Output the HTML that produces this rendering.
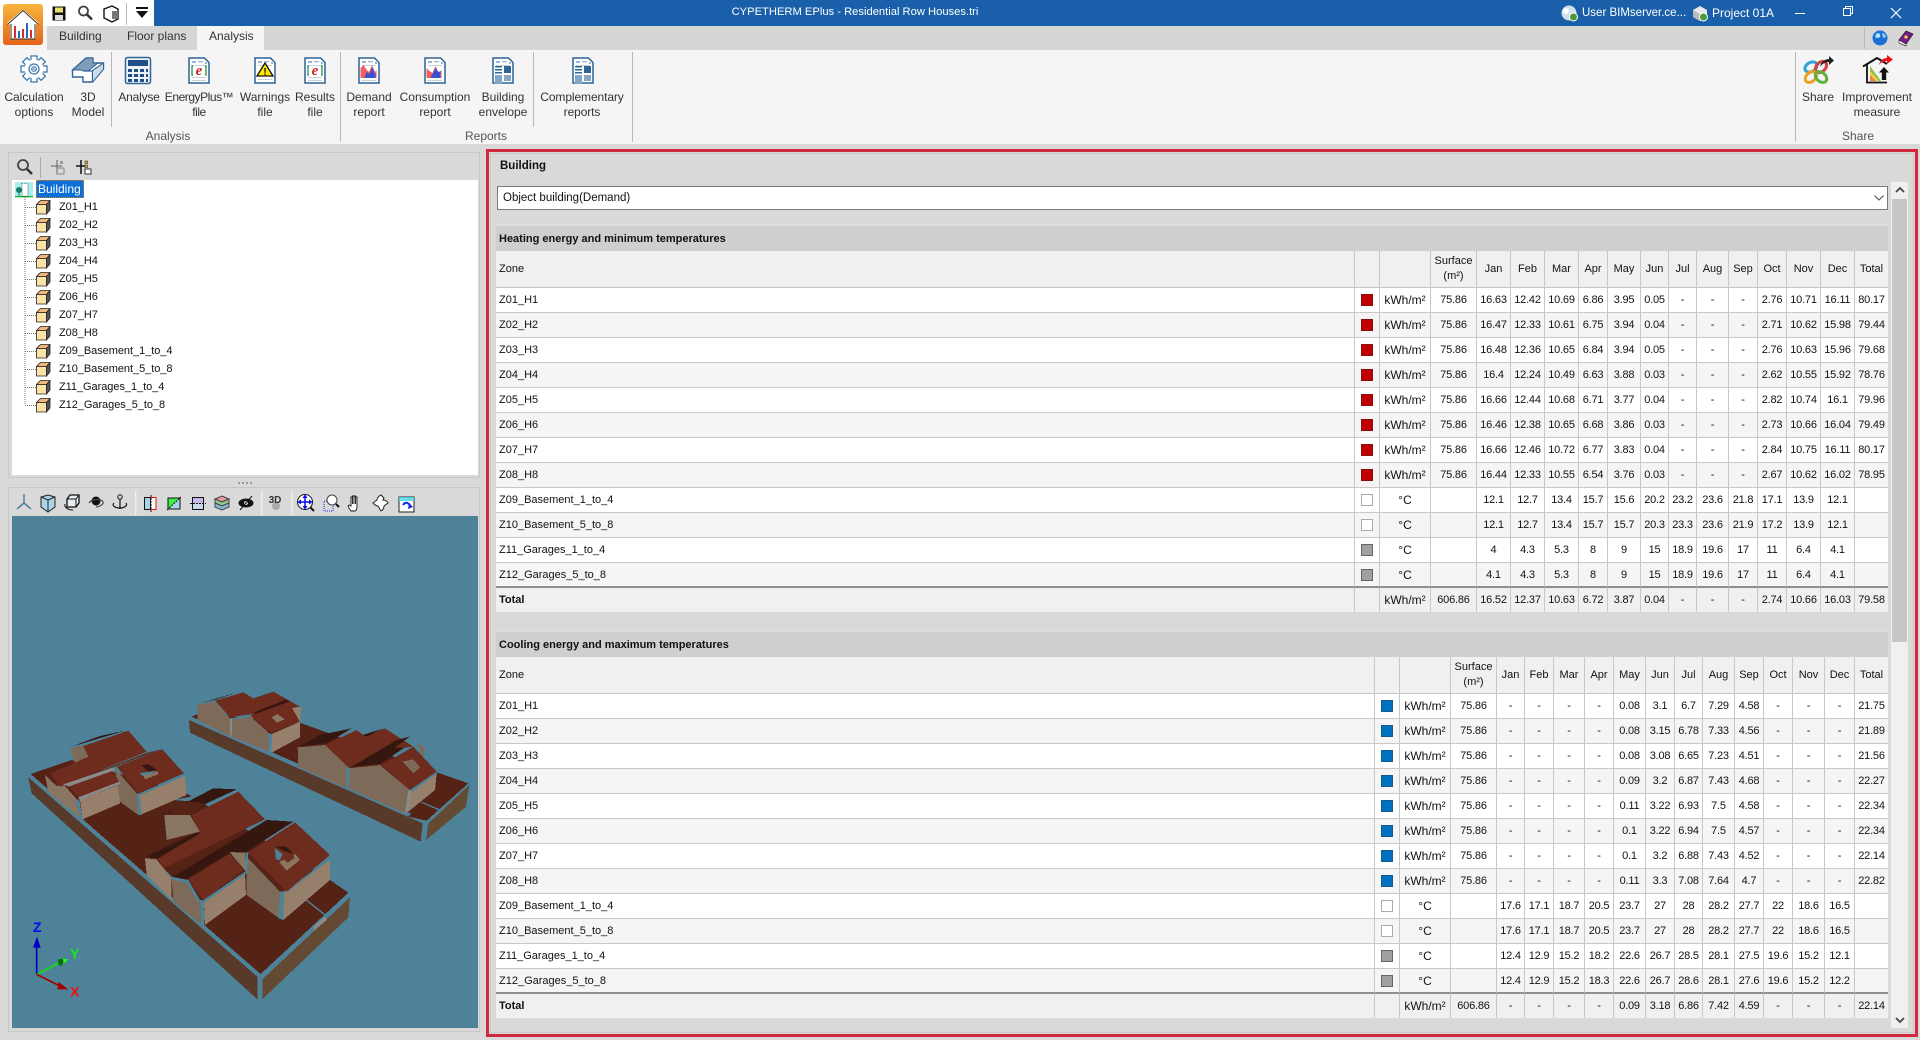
<!DOCTYPE html>
<html><head><meta charset="utf-8"><title>CYPETHERM EPlus</title>
<style>
html,body{margin:0;padding:0;width:1920px;height:1040px;overflow:hidden;background:#d9d9d9;font-family:"Liberation Sans",sans-serif;color:#222}
div{position:absolute;box-sizing:border-box}
.c{white-space:nowrap;transform:translateX(-50%);text-align:center;font-size:12px;line-height:15px;color:#333}
.a{white-space:nowrap;font-size:12px;line-height:16px}
.tr{left:59px;font-size:11px;line-height:18px;height:18px;color:#111;white-space:nowrap;letter-spacing:-.05px}
.sec{left:496px;width:1392px;height:27px;background:#cfcfcf;border-top:2px solid #dcdcdc;font-weight:bold;font-size:11px;line-height:26px;padding-left:3px;color:#111}
table{position:absolute;left:496px;width:1392px;table-layout:fixed;border-collapse:separate;border-spacing:0;font-size:11px;color:#111}
td{height:25px;padding:0;text-align:center;white-space:nowrap;overflow:hidden;border-right:1px solid #c8c8c8;border-bottom:1px solid #c8c8c8;box-sizing:border-box;letter-spacing:-.2px;background:#fff}
td:first-child{text-align:left;padding-left:3px;letter-spacing:0}
td:nth-child(3){font-size:12px;letter-spacing:0}
td:last-child{border-right:0;background:#f4f4f4}
tr:nth-child(odd) td{background:#f5f5f5}
tr.w td{background:#fff}
tr.h td{height:37px;background:#f0f0f0;line-height:15px;letter-spacing:0;border-bottom:1px solid #c4c4c4}
tr.p td{border-bottom:2px solid #8f8f8f}
tr.t td{height:24px;background:#f0f0f0;border-bottom:0}
i{display:block;width:10px;height:10px;margin:0 auto;border:1px solid #666}
i.r{background:#c00000;border-color:#8a1010}i.b{background:#0070c0;border-color:#1a5a8a}i.g{background:#a0a0a0;border-color:#666}i.e{background:#fff;border-color:#aaa}
</style></head><body>

<!-- chrome -->
<div style="left:0;top:0;width:1920px;height:26px;background:#1a5fa9"></div>
<div style="left:0;top:0;width:154px;height:26px;background:#fff"></div>
<div style="left:0;top:26px;width:1920px;height:24px;background:#d6d6d6"></div>
<div style="left:0;top:26px;width:47px;height:24px;background:#f5f5f5"></div>
<div style="left:197px;top:26px;width:67px;height:24px;background:#f5f5f5"></div>
<div style="left:0;top:50px;width:1920px;height:94px;background:#f5f5f5"></div>

<div class="c" style="left:855px;top:5px;color:#fff;font-size:11.2px;width:260px">CYPETHERM EPlus - Residential Row Houses.tri</div>
<div class="a" style="left:1582px;top:5px;color:#fff;font-size:11.5px">User BIMserver.ce...</div>
<div class="a" style="left:1712px;top:5px;color:#fff;font-size:12px">Project 01A</div>

<div class="a" style="left:59px;top:28px;color:#333">Building</div>
<div class="a" style="left:127px;top:28px;color:#333">Floor plans</div>
<div class="a" style="left:209px;top:28px;color:#333">Analysis</div>

<div class="c" style="left:34px;top:90px">Calculation<br>options</div>
<div class="c" style="left:88px;top:90px">3D<br>Model</div>
<div class="c" style="left:139px;top:90px;letter-spacing:-.2px">Analyse</div>
<div class="c" style="left:199px;top:90px;letter-spacing:-.45px">EnergyPlus™<br>file</div>
<div class="c" style="left:265px;top:90px">Warnings<br>file</div>
<div class="c" style="left:315px;top:90px">Results<br>file</div>
<div class="c" style="left:369px;top:90px">Demand<br>report</div>
<div class="c" style="left:435px;top:90px">Consumption<br>report</div>
<div class="c" style="left:503px;top:90px">Building<br>envelope</div>
<div class="c" style="left:582px;top:90px;letter-spacing:-.1px">Complementary<br>reports</div>
<div class="c" style="left:168px;top:129px;color:#555">Analysis</div>
<div class="c" style="left:486px;top:129px;color:#555">Reports</div>
<div class="c" style="left:1818px;top:90px">Share</div>
<div class="c" style="left:1877px;top:90px">Improvement<br>measure</div>
<div class="c" style="left:1858px;top:129px;color:#555">Share</div>

<div style="left:111px;top:52px;width:1px;height:75px;background:#b8b8b8"></div>
<div style="left:340px;top:52px;width:1px;height:90px;background:#b8b8b8"></div>
<div style="left:533px;top:52px;width:1px;height:75px;background:#b8b8b8"></div>
<div style="left:632px;top:52px;width:1px;height:90px;background:#b8b8b8"></div>
<div style="left:1795px;top:52px;width:1px;height:90px;background:#b8b8b8"></div>
<div style="left:1864px;top:27px;width:1px;height:22px;background:#b8b8b8"></div>

<!-- left panels -->
<div style="left:8px;top:152px;width:472px;height:326px;border:1px solid #c8c8c8"></div>
<div style="left:12px;top:180px;width:466px;height:295px;background:#fff"></div>
<div style="left:36px;top:180px;width:48px;height:18px;background:#0a6fd8;outline:1px dotted #e07a10;outline-offset:-1px;color:#fff;font-size:12px;line-height:18px;padding-left:2px">Building</div>
<div class="tr" style="top:198px">Z01_H1</div>
<div class="tr" style="top:216px">Z02_H2</div>
<div class="tr" style="top:234px">Z03_H3</div>
<div class="tr" style="top:252px">Z04_H4</div>
<div class="tr" style="top:270px">Z05_H5</div>
<div class="tr" style="top:288px">Z06_H6</div>
<div class="tr" style="top:306px">Z07_H7</div>
<div class="tr" style="top:324px">Z08_H8</div>
<div class="tr" style="top:342px">Z09_Basement_1_to_4</div>
<div class="tr" style="top:360px">Z10_Basement_5_to_8</div>
<div class="tr" style="top:378px">Z11_Garages_1_to_4</div>
<div class="tr" style="top:396px">Z12_Garages_5_to_8</div>

<div style="left:8px;top:487px;width:472px;height:545px;border:1px solid #c8c8c8"></div>
<div style="left:12px;top:516px;width:466px;height:512px;background:#4d8299;overflow:hidden">
<svg style="position:absolute;left:-12px;top:-516px" width="480" height="1040" shape-rendering="crispEdges">
<g transform="translate(0,660) scale(.33333)">
<!-- Block A -->
<polygon fill="#583a2a" points="85,352 772,950 772,1018 95,400"/>
<polygon fill="#644a32" points="787,958 787,1018 1045,772 1050,712"/>
<polygon fill="#552216" points="92,342 215,300 560,400 990,660 1045,698 782,942"/>
<polygon fill="#4d8299" points="520,420 700,385 990,590 990,660 640,430"/>
<!-- House 1 -->
<polygon fill="#7e6a58" points="210,265 250,255 268,290 225,310"/>
<polygon fill="#8a7562" points="135,345 170,378 190,372 232,420 245,478 185,430 145,395"/>
<polygon fill="#97806b" points="240,420 355,375 360,430 248,478"/>
<polygon fill="#7e6a58" points="345,325 410,400 415,465 360,425"/>
<polygon fill="#97806b" points="418,402 555,345 560,405 420,465"/>
<polygon fill="#4d8299" points="228,420 238,418 248,478 240,474"/>
<polygon fill="#4d8299" points="410,400 418,400 425,465 415,465"/>
<polygon fill="#6e2c1e" points="250,258 385,212 440,275 180,380 150,340 265,290"/>
<polygon fill="#6e2c1e" points="350,320 487,268 552,340 415,400"/>
<polygon fill="#6e2c1e" points="205,378 335,330 358,365 235,412"/>
<polygon fill="#5a3226" points="180,380 440,278 487,268 345,320"/>
<polygon fill="#8a8a8a" points="190,373 340,322 345,330 205,380"/>
<polygon fill="#4d8299" points="418,400 552,342 555,348 420,406"/>
<polygon fill="#8a8a8a" points="235,412 358,365 360,372 240,420"/>
<polygon fill="#36170f" points="222,258 375,212 300,228 240,250"/>
<polygon fill="#36170f" points="425,316 445,313 472,330 445,335"/>
<polygon fill="#4d8299" points="418,340 440,336 470,332 432,350"/>
<polygon fill="#8a7562" points="430,348 472,334 476,342 436,358"/>
<!-- House 2 -->
<polygon fill="#8a7562" points="493,465 570,465 600,515 500,540"/>
<polygon fill="#36170f" points="505,455 640,385 710,388 620,430 575,465 510,462"/>
<polygon fill="#552216" points="520,440 570,425 615,430 575,465 510,462"/>
<polygon fill="#6e2c1e" points="575,465 715,395 795,478 490,625 470,590 600,518"/>
<polygon fill="#36170f" points="440,590 590,517 600,520 475,595"/>
<polygon fill="#97806b" points="435,595 470,598 490,625 515,655 515,720 440,645"/>
<polygon fill="#7e6a58" points="515,655 565,660 600,720 605,795 520,725"/>
<polygon fill="#97806b" points="612,725 735,640 738,705 615,795"/>
<polygon fill="#7e6a58" points="740,590 840,695 838,775 740,705"/>
<polygon fill="#97806b" points="852,695 990,595 990,660 850,780"/>
<polygon fill="#36170f" points="520,650 800,480 880,485 735,578 690,578 555,660"/>
<polygon fill="#6e2c1e" points="745,578 885,487 990,585 860,695"/>
<polygon fill="#6e2c1e" points="565,658 690,582 730,630 610,720"/>
<polygon fill="#8a7562" points="690,576 735,578 738,635 700,590"/>
<polygon fill="#4d8299" points="736,578 745,578 742,640 736,640"/>
<polygon fill="#4d8299" points="600,720 612,722 614,798 604,798"/>
<polygon fill="#4d8299" points="840,695 852,695 850,780 835,775"/>
<polygon fill="#4d8299" points="860,695 990,590 992,598 855,702"/>
<polygon fill="#4d8299" points="610,720 735,635 737,642 612,728"/>
<polygon fill="#4d8299" points="490,625 515,650 565,660 600,720 594,725 560,668 515,658"/>
<polygon fill="#36170f" points="826,560 860,560 880,582 850,572"/>
<polygon fill="#4d8299" points="824,565 848,582 840,600 828,598"/>
<polygon fill="#8a7562" points="838,606 886,582 900,600 860,632"/>
<polygon fill="#6e2c1e" points="852,598 878,584 884,594 862,608"/>
<polygon fill="#8a8a8a" points="940,800 975,770 980,780 945,810"/>
<polygon fill="#4d8299" points="920,718 975,762 973,766 918,722"/>
<!-- Block B -->
<polygon fill="#583a2a" points="567,180 570,218 1262,545 1268,490"/>
<polygon fill="#644a32" points="1278,540 1285,490 1408,375 1398,440"/>
<polygon fill="#552216" points="575,170 600,160 905,190 1305,335 1405,370 1280,482"/>
<polygon fill="#7e6a58" points="592,135 645,125 690,175 692,230 592,180"/>
<polygon fill="#7e6a58" points="695,178 750,168 808,220 806,275 695,230"/>
<polygon fill="#97806b" points="815,222 900,185 900,232 815,278"/>
<polygon fill="#97806b" points="868,148 903,140 900,185"/>
<polygon fill="#6e2c1e" points="645,122 730,97 760,115 820,95 900,140 690,172"/>
<polygon fill="#6e2c1e" points="750,165 868,130 900,185 810,218"/>
<polygon fill="#36170f" points="760,158 860,118 868,125 765,162"/>
<polygon fill="#36170f" points="600,130 720,95 650,118"/>
<polygon fill="#4d8299" points="692,175 750,165 750,170 694,180"/>
<polygon fill="#8a8a8a" points="690,175 696,175 695,232 690,228"/>
<polygon fill="#4d8299" points="806,220 816,222 814,280 806,276"/>
<polygon fill="#8a7562" points="815,172 832,162 855,178 830,188"/>
<polygon fill="#7e6a58" points="893,262 975,255 1045,320 1040,385 895,320"/>
<polygon fill="#7e6a58" points="1045,325 1140,315 1230,390 1215,460 1045,385"/>
<polygon fill="#97806b" points="1235,392 1310,340 1305,390 1225,455"/>
<polygon fill="#36170f" points="900,258 960,225 1055,205 980,250"/>
<polygon fill="#7e6a58" points="1250,245 1275,265 1270,295"/>
<polygon fill="#6e2c1e" points="975,255 1070,210 1150,270 1045,322"/>
<polygon fill="#6e2c1e" points="1085,235 1155,205 1240,260 1150,270"/>
<polygon fill="#36170f" points="1088,225 1150,205 1100,230"/>
<polygon fill="#36170f" points="1055,320 1190,240 1230,230 1185,262 1215,262 1140,312"/>
<polygon fill="#6e2c1e" points="1145,315 1240,260 1310,335 1230,390"/>
<polygon fill="#4d8299" points="1230,390 1310,335 1312,340 1235,396"/>
<polygon fill="#4d8299" points="1040,322 1050,322 1045,385 1038,385"/>
<polygon fill="#8a8a8a" points="1225,392 1235,392 1225,455 1215,460"/>
<polygon fill="#7e6a58" points="1208,305 1240,298 1260,322 1240,340"/>
<polygon fill="#552216" points="1225,470 1270,425 1315,445 1280,482"/>
<polygon fill="#4d8299" points="1265,425 1320,448 1318,452 1263,428"/>
<polygon fill="#4d8299" points="1280,482 1405,370 1408,375 1285,490"/>
<polygon fill="#4d8299" points="1262,545 1268,490 1278,490 1272,545"/>
</g>
</svg>
</div>
<svg style="position:absolute;left:0;top:660px" width="480" height="380" viewBox="0 0 1440 1140">
<line x1="110" y1="943" x2="110" y2="860" stroke="#0000c0" stroke-width="5"/>
<polygon fill="#0000c0" points="99,863 122,863 111,830"/>
<line x1="110" y1="943" x2="185" y2="905" stroke="#10e010" stroke-width="5"/>
<polygon fill="#007000" points="174,898 192,896 186,918 176,915"/>
<polygon fill="#20ff20" points="188,896 205,898 192,910"/>
<line x1="110" y1="943" x2="180" y2="978" stroke="#a00000" stroke-width="5"/>
<polygon fill="#a00000" points="176,966 205,988 172,988"/>
<text x="112" y="816" font-family="Liberation Sans" font-weight="bold" font-size="42" text-anchor="middle" fill="#0808f0">Z</text>
<text x="224" y="896" font-family="Liberation Sans" font-weight="bold" font-size="42" text-anchor="middle" fill="#10f010">Y</text>
<text x="224" y="1010" font-family="Liberation Sans" font-weight="bold" font-size="42" text-anchor="middle" fill="#f01010">X</text>
</svg>
<div style="left:238px;top:482px;width:15px;height:2px;background:repeating-linear-gradient(90deg,#999 0 2px,transparent 2px 4px)"></div>

<!-- right panel -->
<div style="left:486px;top:149px;width:1432px;height:888px;border:3px solid #d0283c"></div>
<div style="left:490px;top:153px;width:1424px;height:880px;border:1px solid #c8c8c8"></div>
<div class="a" style="left:500px;top:158px;font-weight:bold;font-size:11.5px;color:#111">Building</div>
<div style="left:497px;top:186px;width:1391px;height:24px;background:#fff;border:1px solid #7a7a7a;font-size:11.5px;line-height:23px;padding-left:5px;color:#111">Object building(Demand)</div>
<svg style="position:absolute;left:1873px;top:194px" width="12" height="8"><path d="M1.5 1.5L6 6l4.500-4.500" fill="none" stroke="#555" stroke-width="1.100"/></svg>

<div style="left:1891px;top:182px;width:17px;height:846px;background:#f0f0f0"></div>
<div style="left:1892px;top:199px;width:15px;height:443px;background:#c6c6c6"></div>
<svg style="position:absolute;left:1894px;top:185px" width="12" height="10"><path d="M2 7L6 3l4 4" fill="none" stroke="#444" stroke-width="1.800"/></svg>
<svg style="position:absolute;left:1894px;top:1015px" width="12" height="10"><path d="M2 3l4 4 4-4" fill="none" stroke="#444" stroke-width="1.800"/></svg>

<div class="sec" style="top:224px">Heating energy and minimum temperatures</div>
<table style="top:251px">
<colgroup><col style="width:859px"><col style="width:25px"><col style="width:51px"><col style="width:46px"><col style="width:34px"><col style="width:34px"><col style="width:34px"><col style="width:29px"><col style="width:33px"><col style="width:28px"><col style="width:28px"><col style="width:32px"><col style="width:29px"><col style="width:29px"><col style="width:34px"><col style="width:34px"><col style="width:33px"></colgroup>
<tr class="h"><td>Zone</td><td></td><td></td><td>Surface<br>(m²)</td><td>Jan</td><td>Feb</td><td>Mar</td><td>Apr</td><td>May</td><td>Jun</td><td>Jul</td><td>Aug</td><td>Sep</td><td>Oct</td><td>Nov</td><td>Dec</td><td>Total</td></tr>
<tr class="w"><td>Z01_H1</td><td><i class="r"></i></td><td>kWh/m²</td><td>75.86</td><td>16.63</td><td>12.42</td><td>10.69</td><td>6.86</td><td>3.95</td><td>0.05</td><td>-</td><td>-</td><td>-</td><td>2.76</td><td>10.71</td><td>16.11</td><td>80.17</td></tr>
<tr><td>Z02_H2</td><td><i class="r"></i></td><td>kWh/m²</td><td>75.86</td><td>16.47</td><td>12.33</td><td>10.61</td><td>6.75</td><td>3.94</td><td>0.04</td><td>-</td><td>-</td><td>-</td><td>2.71</td><td>10.62</td><td>15.98</td><td>79.44</td></tr>
<tr class="w"><td>Z03_H3</td><td><i class="r"></i></td><td>kWh/m²</td><td>75.86</td><td>16.48</td><td>12.36</td><td>10.65</td><td>6.84</td><td>3.94</td><td>0.05</td><td>-</td><td>-</td><td>-</td><td>2.76</td><td>10.63</td><td>15.96</td><td>79.68</td></tr>
<tr><td>Z04_H4</td><td><i class="r"></i></td><td>kWh/m²</td><td>75.86</td><td>16.4</td><td>12.24</td><td>10.49</td><td>6.63</td><td>3.88</td><td>0.03</td><td>-</td><td>-</td><td>-</td><td>2.62</td><td>10.55</td><td>15.92</td><td>78.76</td></tr>
<tr class="w"><td>Z05_H5</td><td><i class="r"></i></td><td>kWh/m²</td><td>75.86</td><td>16.66</td><td>12.44</td><td>10.68</td><td>6.71</td><td>3.77</td><td>0.04</td><td>-</td><td>-</td><td>-</td><td>2.82</td><td>10.74</td><td>16.1</td><td>79.96</td></tr>
<tr><td>Z06_H6</td><td><i class="r"></i></td><td>kWh/m²</td><td>75.86</td><td>16.46</td><td>12.38</td><td>10.65</td><td>6.68</td><td>3.86</td><td>0.03</td><td>-</td><td>-</td><td>-</td><td>2.73</td><td>10.66</td><td>16.04</td><td>79.49</td></tr>
<tr class="w"><td>Z07_H7</td><td><i class="r"></i></td><td>kWh/m²</td><td>75.86</td><td>16.66</td><td>12.46</td><td>10.72</td><td>6.77</td><td>3.83</td><td>0.04</td><td>-</td><td>-</td><td>-</td><td>2.84</td><td>10.75</td><td>16.11</td><td>80.17</td></tr>
<tr><td>Z08_H8</td><td><i class="r"></i></td><td>kWh/m²</td><td>75.86</td><td>16.44</td><td>12.33</td><td>10.55</td><td>6.54</td><td>3.76</td><td>0.03</td><td>-</td><td>-</td><td>-</td><td>2.67</td><td>10.62</td><td>16.02</td><td>78.95</td></tr>
<tr class="w"><td>Z09_Basement_1_to_4</td><td><i class="e"></i></td><td>°C</td><td></td><td>12.1</td><td>12.7</td><td>13.4</td><td>15.7</td><td>15.6</td><td>20.2</td><td>23.2</td><td>23.6</td><td>21.8</td><td>17.1</td><td>13.9</td><td>12.1</td><td></td></tr>
<tr><td>Z10_Basement_5_to_8</td><td><i class="e"></i></td><td>°C</td><td></td><td>12.1</td><td>12.7</td><td>13.4</td><td>15.7</td><td>15.7</td><td>20.3</td><td>23.3</td><td>23.6</td><td>21.9</td><td>17.2</td><td>13.9</td><td>12.1</td><td></td></tr>
<tr class="w"><td>Z11_Garages_1_to_4</td><td><i class="g"></i></td><td>°C</td><td></td><td>4</td><td>4.3</td><td>5.3</td><td>8</td><td>9</td><td>15</td><td>18.9</td><td>19.6</td><td>17</td><td>11</td><td>6.4</td><td>4.1</td><td></td></tr>
<tr class="p"><td>Z12_Garages_5_to_8</td><td><i class="g"></i></td><td>°C</td><td></td><td>4.1</td><td>4.3</td><td>5.3</td><td>8</td><td>9</td><td>15</td><td>18.9</td><td>19.6</td><td>17</td><td>11</td><td>6.4</td><td>4.1</td><td></td></tr>
<tr class="t"><td><b>Total</b></td><td></td><td>kWh/m²</td><td>606.86</td><td>16.52</td><td>12.37</td><td>10.63</td><td>6.72</td><td>3.87</td><td>0.04</td><td>-</td><td>-</td><td>-</td><td>2.74</td><td>10.66</td><td>16.03</td><td>79.58</td></tr>
</table>

<div class="sec" style="top:630px">Cooling energy and maximum temperatures</div>
<table style="top:657px">
<colgroup><col style="width:879px"><col style="width:25px"><col style="width:51px"><col style="width:46px"><col style="width:28px"><col style="width:29px"><col style="width:31px"><col style="width:29px"><col style="width:32px"><col style="width:29px"><col style="width:28px"><col style="width:32px"><col style="width:29px"><col style="width:29px"><col style="width:32px"><col style="width:30px"><col style="width:33px"></colgroup>
<tr class="h"><td>Zone</td><td></td><td></td><td>Surface<br>(m²)</td><td>Jan</td><td>Feb</td><td>Mar</td><td>Apr</td><td>May</td><td>Jun</td><td>Jul</td><td>Aug</td><td>Sep</td><td>Oct</td><td>Nov</td><td>Dec</td><td>Total</td></tr>
<tr class="w"><td>Z01_H1</td><td><i class="b"></i></td><td>kWh/m²</td><td>75.86</td><td>-</td><td>-</td><td>-</td><td>-</td><td>0.08</td><td>3.1</td><td>6.7</td><td>7.29</td><td>4.58</td><td>-</td><td>-</td><td>-</td><td>21.75</td></tr>
<tr><td>Z02_H2</td><td><i class="b"></i></td><td>kWh/m²</td><td>75.86</td><td>-</td><td>-</td><td>-</td><td>-</td><td>0.08</td><td>3.15</td><td>6.78</td><td>7.33</td><td>4.56</td><td>-</td><td>-</td><td>-</td><td>21.89</td></tr>
<tr class="w"><td>Z03_H3</td><td><i class="b"></i></td><td>kWh/m²</td><td>75.86</td><td>-</td><td>-</td><td>-</td><td>-</td><td>0.08</td><td>3.08</td><td>6.65</td><td>7.23</td><td>4.51</td><td>-</td><td>-</td><td>-</td><td>21.56</td></tr>
<tr><td>Z04_H4</td><td><i class="b"></i></td><td>kWh/m²</td><td>75.86</td><td>-</td><td>-</td><td>-</td><td>-</td><td>0.09</td><td>3.2</td><td>6.87</td><td>7.43</td><td>4.68</td><td>-</td><td>-</td><td>-</td><td>22.27</td></tr>
<tr class="w"><td>Z05_H5</td><td><i class="b"></i></td><td>kWh/m²</td><td>75.86</td><td>-</td><td>-</td><td>-</td><td>-</td><td>0.11</td><td>3.22</td><td>6.93</td><td>7.5</td><td>4.58</td><td>-</td><td>-</td><td>-</td><td>22.34</td></tr>
<tr><td>Z06_H6</td><td><i class="b"></i></td><td>kWh/m²</td><td>75.86</td><td>-</td><td>-</td><td>-</td><td>-</td><td>0.1</td><td>3.22</td><td>6.94</td><td>7.5</td><td>4.57</td><td>-</td><td>-</td><td>-</td><td>22.34</td></tr>
<tr class="w"><td>Z07_H7</td><td><i class="b"></i></td><td>kWh/m²</td><td>75.86</td><td>-</td><td>-</td><td>-</td><td>-</td><td>0.1</td><td>3.2</td><td>6.88</td><td>7.43</td><td>4.52</td><td>-</td><td>-</td><td>-</td><td>22.14</td></tr>
<tr><td>Z08_H8</td><td><i class="b"></i></td><td>kWh/m²</td><td>75.86</td><td>-</td><td>-</td><td>-</td><td>-</td><td>0.11</td><td>3.3</td><td>7.08</td><td>7.64</td><td>4.7</td><td>-</td><td>-</td><td>-</td><td>22.82</td></tr>
<tr class="w"><td>Z09_Basement_1_to_4</td><td><i class="e"></i></td><td>°C</td><td></td><td>17.6</td><td>17.1</td><td>18.7</td><td>20.5</td><td>23.7</td><td>27</td><td>28</td><td>28.2</td><td>27.7</td><td>22</td><td>18.6</td><td>16.5</td><td></td></tr>
<tr><td>Z10_Basement_5_to_8</td><td><i class="e"></i></td><td>°C</td><td></td><td>17.6</td><td>17.1</td><td>18.7</td><td>20.5</td><td>23.7</td><td>27</td><td>28</td><td>28.2</td><td>27.7</td><td>22</td><td>18.6</td><td>16.5</td><td></td></tr>
<tr class="w"><td>Z11_Garages_1_to_4</td><td><i class="g"></i></td><td>°C</td><td></td><td>12.4</td><td>12.9</td><td>15.2</td><td>18.2</td><td>22.6</td><td>26.7</td><td>28.5</td><td>28.1</td><td>27.5</td><td>19.6</td><td>15.2</td><td>12.1</td><td></td></tr>
<tr class="p"><td>Z12_Garages_5_to_8</td><td><i class="g"></i></td><td>°C</td><td></td><td>12.4</td><td>12.9</td><td>15.2</td><td>18.3</td><td>22.6</td><td>26.7</td><td>28.6</td><td>28.1</td><td>27.6</td><td>19.6</td><td>15.2</td><td>12.2</td><td></td></tr>
<tr class="t"><td><b>Total</b></td><td></td><td>kWh/m²</td><td>606.86</td><td>-</td><td>-</td><td>-</td><td>-</td><td>0.09</td><td>3.18</td><td>6.86</td><td>7.42</td><td>4.59</td><td>-</td><td>-</td><td>-</td><td>22.14</td></tr>
</table>

<!-- icon overlay -->
<svg style="position:absolute;left:0;top:0" width="1920" height="1040">
<defs>
<linearGradient id="og" x1="0" y1="0" x2="0" y2="1"><stop offset="0" stop-color="#f7b63d"/><stop offset="1" stop-color="#e4641a"/></linearGradient>
<symbol id="doc" viewBox="0 0 22 27" width="22" height="27"><path d="M1 1H16.500L21 5.500V26H1Z" fill="#fff" stroke="#2e6496" stroke-width="1.500"/><path d="M4 4h4v2H4zM10 4h5v1.200h-5zM17 5h2v2h-2z" fill="#9db4ca"/><path d="M4 8h14v1H4z" fill="#c4d0dc"/></symbol>
<symbol id="cube" viewBox="0 0 15 15" width="15" height="15"><path d="M4.500.5H14L10.500 4.500H.5Z" fill="#f3b77e" stroke="#222" stroke-width=".8"/><path d="M.5 4.500H10.500V14H.5Z" fill="#fbe2a6" stroke="#222" stroke-width=".8"/><path d="M10.500 4.500L14 .5V10L10.500 14Z" fill="#555" stroke="#222" stroke-width=".8"/></symbol>
</defs>

<!-- logo -->
<rect x="3" y="4" width="40" height="41" rx="3" fill="url(#og)"/>
<path d="M10 22V39H36V22L23 12Z" fill="#fff"/>
<path d="M8 24L23 11l15 13" fill="none" stroke="#fff" stroke-width="2.500"/>
<path d="M7.500 24.500L23 10.500 38.500 24.500M11 24V39H35V24" fill="none" stroke="#3a2a18" stroke-width="1"/>
<path d="M14 26h2v12h-2zM22 29h2v9h-2zM30 30h2v8h-2z" fill="#d23030"/><path d="M18 31h2v7h-2zM26 23h2v15h-2z" fill="#2c66b8"/>

<!-- QAT -->
<path d="M52.500 6.500H65.500V20.500H52.500Z" fill="#111"/><rect x="55" y="7.500" width="8" height="5" fill="#e8e070"/><rect x="55" y="15" width="8" height="5" fill="#ddd"/>
<circle cx="83.500" cy="11" r="4.500" fill="none" stroke="#444" stroke-width="1.800"/><path d="M87 14.500l5 5" stroke="#333" stroke-width="2.500"/>
<path d="M104 9l8-3 6 3v10l-6 3-8-4Z" fill="#fff" stroke="#111" stroke-width="1.400"/><rect x="112" y="11" width="6" height="8" fill="#777"/>
<rect x="126" y="3" width="1" height="22" fill="#bbb"/>
<rect x="136" y="7" width="12" height="2" fill="#111"/><polygon points="136,11 148,11 142,18" fill="#111"/>

<!-- gear -->
<g transform="translate(34,69)" fill="#fff" stroke="#3f7cae" stroke-width="1.300">
<rect x="-3" y="-13" width="6" height="7"/><rect x="-3" y="-13" width="6" height="7" transform="rotate(45)"/><rect x="-3" y="-13" width="6" height="7" transform="rotate(90)"/><rect x="-3" y="-13" width="6" height="7" transform="rotate(135)"/><rect x="-3" y="-13" width="6" height="7" transform="rotate(180)"/><rect x="-3" y="-13" width="6" height="7" transform="rotate(225)"/><rect x="-3" y="-13" width="6" height="7" transform="rotate(270)"/><rect x="-3" y="-13" width="6" height="7" transform="rotate(315)"/>
<circle r="9.500" stroke="none"/><circle r="5"/><circle r="2.500" fill="#a8b8c8" stroke="#3f7cae" stroke-width=".8"/></g>
<!-- 3D model -->
<path d="M72.500 70L86 58h7v5h10.500v6L92.500 82H83V77H72.500Z" fill="#fff" stroke="#2e6496" stroke-width="1.400" stroke-linejoin="round"/>
<path d="M72.500 70L86 58h7v5h5l-10 8h-4l-3 -1Z" fill="#7f9cb8" stroke="#2e6496" stroke-width="1"/>
<path d="M83 71h9l11.500-8M92.500 71V82" fill="none" stroke="#2e6496" stroke-width="1.300"/>
<rect x="93" y="72" width="0" height="0"/>
<path d="M93 72l10-8v5l-10 12Z" fill="#cddbe8"/>
<!-- calculator -->
<rect x="125.500" y="57.500" width="25" height="26" rx="2" fill="#eef3f8" stroke="#2e6496" stroke-width="1.500"/><rect x="128" y="60" width="20" height="6" fill="#1f4f86"/>
<path d="M128 69h4v3h-4zM134 69h4v3h-4zM140 69h4v3h-4zM146 69h2v3h-2zM128 74h4v3h-4zM134 74h4v3h-4zM140 74h4v3h-4zM146 74h2v3h-2zM128 79h4v3h-4zM134 79h4v3h-4zM140 79h4v3h-4zM146 79h2v3h-2z" fill="#1f4f86"/>
<!-- docs -->
<use href="#doc" x="188" y="57"/><use href="#doc" x="254" y="57"/><use href="#doc" x="304" y="57"/><use href="#doc" x="358" y="57"/><use href="#doc" x="424" y="57"/><use href="#doc" x="492" y="57"/><use href="#doc" x="572" y="57"/>
<path d="M193 66h-1v9h1M205 66h1v9h-1" stroke="#1a8a3a" stroke-width="1.200" fill="none"/><text x="199" y="75" font-family="Liberation Serif" font-weight="bold" font-style="italic" font-size="15" text-anchor="middle" fill="#c8281e">e</text><path d="M192 77h14v1H192zM192 80h14v1H192z" fill="#c4d0dc"/>
<path d="M309 66h-1v9h1M321 66h1v9h-1" stroke="#1a8a3a" stroke-width="1.200" fill="none"/><text x="315" y="75" font-family="Liberation Serif" font-weight="bold" font-style="italic" font-size="15" text-anchor="middle" fill="#c8281e">e</text><path d="M308 77h14v1H308zM308 80h14v1H308z" fill="#c4d0dc"/>
<polygon points="265,63 273,76 257,76" fill="#ffe400" stroke="#111" stroke-width="1.300"/><text x="265" y="75" font-family="Liberation Sans" font-weight="bold" font-size="10" text-anchor="middle" fill="#111">!</text><path d="M258 79h14v1H258z" fill="#c4d0dc"/>
<path d="M360.500 78V68l3-3 2.500 4 3 3 3-7 3 7 1.500-2V78Z" fill="#f06060"/><path d="M364.500 78l2-6 3 2 3-7 2 7 1-1V78Z" fill="#3a50d0"/><path d="M361 80h15v1h-15z" fill="#c4d0dc"/>
<path d="M426.500 78V68l3 3 3 2 3-7 3 7 3-3V78Z" fill="#f06060"/><path d="M430.500 78l2-4 3-6 3 4 2-1V78Z" fill="#3a50d0"/><path d="M427 80h15v1h-15z" fill="#c4d0dc"/>
<path d="M495 66h7v1.500h-7zM495 69h7v1.500h-7zM495 72h7v1.500h-7zM504 66h7v7h-7z" fill="#2e6496"/><path d="M495 75h7v9h-7zM504 75h7v6h-7z" fill="#84a6c6"/>
<path d="M575 66h7v1.500h-7zM575 69h7v1.500h-7zM575 72h7v1.500h-7zM584 66h7v7h-7z" fill="#2e6496"/><path d="M575 75h7v9h-7zM584 75h7v6h-7z" fill="#84a6c6"/>

<!-- share -->
<g fill="none" stroke-width="3"><ellipse cx="1811" cy="67" rx="6.500" ry="4.500" stroke="#2fa3d8" transform="rotate(-30 1811 67)"/><ellipse cx="1821" cy="67" rx="6.500" ry="4.500" stroke="#d84040" transform="rotate(-45 1821 67)"/><ellipse cx="1811" cy="77" rx="6.500" ry="4.500" stroke="#f0a020" transform="rotate(-40 1811 77)"/><ellipse cx="1821" cy="77" rx="6.500" ry="4.500" stroke="#60b040" transform="rotate(40 1821 77)"/></g>
<path d="M1820 67c1-6 6-8 9-8v-3l5 4.500-5 4.500v-3c-3 0-6 1-9 5Z" fill="#222"/>
<!-- improvement -->
<path d="M1863 66.500L1877 58l10 6" fill="none" stroke="#111" stroke-width="2"/><path d="M1867 64V82.500H1887" fill="none" stroke="#111" stroke-width="1.800"/>
<path d="M1870 66V81H1881Z" fill="#8ec050"/><path d="M1870 71V81H1879Z" fill="#f0d040"/><path d="M1870 75V81H1876Z" fill="#f08040"/>
<path d="M1884 67l5 5.500h-2.800v7.500h-4.400v-7.500h-2.800Z" fill="#111"/>
<path d="M1879 65c1-5 5-7 8-7v-3l6 4.500-6 4.500v-3c-3 0-6 1-8 4Z" fill="#f01010"/>

<!-- title bar icons -->
<circle cx="1569" cy="13" r="7.500" fill="#cfe0ee"/><circle cx="1566" cy="11" r="3" fill="#fff"/><circle cx="1573.500" cy="17" r="4" fill="#4a9a3a" stroke="#fff"/>
<path d="M1693 10l7-4 7 4v7l-7 4-7-4Z" fill="#e8e8e8"/><path d="M1700 14v7l-7-4v-7Z" fill="#bbb"/><circle cx="1703.500" cy="17" r="4" fill="#4a9a3a" stroke="#fff"/>
<rect x="1795" y="13" width="10" height="1" fill="#fff"/>
<path d="M1843.500 15.500h7v-7h-7ZM1845.500 8.500v-2h7v7h-2" fill="none" stroke="#fff"/>
<path d="M1891 8l10 10M1901 8l-10 10" stroke="#fff" stroke-width="1.200"/>
<!-- globe + book -->
<circle cx="1880" cy="38" r="7.500" fill="#1d6fd8"/><path d="M1875 36c2-3 4-2 5-1s0 3-2 3-2 1-3-2ZM1882 33c2 0 4 2 4 4l-3 1Z" fill="#8fd0f8"/><circle cx="1878" cy="35" r="2" fill="#d8f0ff" opacity=".7"/>
<path d="M1899 40l7-9 7 3-7 10Z" fill="#7a1a90" stroke="#222" stroke-width=".8"/><path d="M1899 40v3l7 3 0-2Z" fill="#eee" stroke="#222" stroke-width=".6"/><circle cx="1906" cy="37" r="1.600" fill="#ffe040"/>

<!-- left toolbar -->
<circle cx="23" cy="165" r="5" fill="none" stroke="#444" stroke-width="1.800"/><path d="M27 169l5 5" stroke="#333" stroke-width="2.500"/>
<rect x="40" y="157" width="1" height="21" fill="#aaa"/>
<path d="M51 166h11M57 160v14" stroke="#777" stroke-width="1.300" fill="none"/><rect x="57" y="168" width="7" height="6" fill="none" stroke="#888"/><rect x="60" y="161" width="3" height="3" fill="#999"/>
<path d="M76 166h10M81 160v14" stroke="#111" stroke-width="1.500" fill="none"/><rect x="85" y="169" width="6" height="5" fill="#fff" stroke="#333"/><rect x="85" y="161" width="2.500" height="2.500" fill="#d8c020" stroke="#111" stroke-width=".5"/><rect x="85" y="165" width="2.500" height="2.500" fill="#d8c020" stroke="#111" stroke-width=".5"/>

<!-- tree -->
<rect x="15" y="182" width="18" height="15" fill="#a8f0f0"/><rect x="15" y="196" width="18" height="1.300" fill="#14b030"/><circle cx="19" cy="190" r="3" fill="#1b7a70"/><rect x="18.500" y="190" width="1" height="6" fill="#1b7a70"/><rect x="22" y="183.500" width="6" height="12.500" fill="#fff" stroke="#111" stroke-width=".6" stroke-dasharray="1 1"/>
<path d="M25 197V405" stroke="#777" stroke-dasharray="1 1"/>
<path d="M25 207.500h11M25 225.500h11M25 243.500h11M25 261.500h11M25 279.500h11M25 297.500h11M25 315.500h11M25 333.500h11M25 351.500h11M25 369.500h11M25 387.500h11M25 405.500h11" stroke="#777" stroke-dasharray="1 1"/>
<use href="#cube" x="36" y="200"/><use href="#cube" x="36" y="218"/><use href="#cube" x="36" y="236"/><use href="#cube" x="36" y="254"/><use href="#cube" x="36" y="272"/><use href="#cube" x="36" y="290"/><use href="#cube" x="36" y="308"/><use href="#cube" x="36" y="326"/><use href="#cube" x="36" y="344"/><use href="#cube" x="36" y="362"/><use href="#cube" x="36" y="380"/><use href="#cube" x="36" y="398"/>

<!-- 3D toolbar -->
<path d="M24 503v-9M24 503l-7 6M24 503l7 6" stroke="#4a8098" stroke-width="1.500" fill="none"/>
<path d="M48 495l7 2v10l-7 5-7-5v-10Z" fill="#a8d4e8" stroke="#222"/><path d="M41 497l7 3 7-3M48 500v11" stroke="#222" fill="none"/>
<path d="M67 499l3-4h9v8l-3 4h-9Z" fill="#e8f0f4" stroke="#111" stroke-width="1.300"/><path d="M67 499h9v8M76 499l3-4" stroke="#111" fill="none"/><path d="M65 504a8 5 0 0 0 8 6" stroke="#111" fill="none"/>
<circle cx="96" cy="501" r="4.500" fill="#111"/><path d="M89 503c2-4 12-5 14-1 1 3-5 5-7 5" stroke="#444" stroke-width="1.200" fill="none"/>
<circle cx="120" cy="497" r="2.200" fill="none" stroke="#111"/><path d="M120 499v10M114 503c-3 3 2 5 6 5s8-2 6-5" stroke="#111" stroke-width="1.200" fill="none"/>
<rect x="135" y="491" width="1.500" height="24" fill="#eee"/>
<rect x="145" y="498" width="5" height="11" fill="#a8d4e8"/><rect x="150" y="498" width="6" height="11" fill="#fff"/><path d="M144.500 497.500h6v12h-6Z" fill="none" stroke="#111"/><path d="M150.500 497.500h5.500v12h-5.500" fill="none" stroke="#e01010"/><path d="M151 495v17" stroke="#111" stroke-dasharray="2 1"/>
<path d="M168 498h12L168 509Z" fill="#40f040"/><path d="M180 498v11H168Z" fill="#a8d4e8"/><rect x="168" y="498" width="12" height="11" fill="none" stroke="#111"/><path d="M167 510L181 497" stroke="#111" stroke-dasharray="2 1"/>
<rect x="192.500" y="497.500" width="11" height="12" fill="#c8d8e8" stroke="#111"/><rect x="193" y="498" width="10" height="5" fill="#c8b8e8"/><path d="M190 503.500h16" stroke="#111" stroke-dasharray="2 1"/>
<path d="M222 496l7 3-7 3-7-3Z" fill="#e89898" stroke="#444"/><path d="M215 503l7 3 7-3v-4l-7 3-7-3Z" fill="#90c890" stroke="#444"/><path d="M215 507l7 3 7-3v-4l-7 3-7-3Z" fill="#88b8d8" stroke="#444"/>
<ellipse cx="246" cy="503" rx="7.500" ry="4.500" fill="#111"/><circle cx="246" cy="503" r="2" fill="#ccc"/><path d="M240 510l12-14" stroke="#111"/>
<rect x="261" y="491" width="1.500" height="24" fill="#eee"/>
<circle cx="276" cy="506" r="4" fill="#aaa"/><text x="275" y="503" font-family="Liberation Sans" font-weight="bold" font-size="10" text-anchor="middle" fill="#333">3D</text>
<rect x="291" y="491" width="1.500" height="24" fill="#eee"/>
<circle cx="305" cy="502" r="7.500" fill="#fff" stroke="#111"/><path d="M305 496v12M299 502h12" stroke="#0a0ae0" stroke-width="1.500"/><polygon points="305,494.500 302.500,498 307.500,498" fill="#0a0ae0"/><polygon points="305,509.500 302.500,506 307.500,506" fill="#0a0ae0"/><polygon points="297.500,502 301,499.500 301,504.500" fill="#0a0ae0"/><polygon points="312.500,502 309,499.500 309,504.500" fill="#0a0ae0"/><path d="M310 507l4 4" stroke="#111" stroke-width="2"/>
<rect x="324" y="501" width="9" height="10" fill="none" stroke="#2222dd" stroke-dasharray="1 1"/><circle cx="332" cy="500" r="5" fill="#fff" stroke="#444"/><path d="M336 504l3 3" stroke="#111" stroke-width="2"/>
<path d="M351 511c-2-3-4-5-2-6l2 1v-9h1.500v7-8h1.500v8-8h1.500v8-7h1.500v10c0 2-1 4-2 4Z" fill="#fff" stroke="#111" stroke-width=".9"/>
<path d="M381 495l3 3-1 2c3 0 5 2 5 3l-4 3c0 2-1 4-3 5l-3-5c-2 0-4-2-5-3l4-3c0-2 2-4 4-5Z" fill="#fff" stroke="#222"/>
<rect x="399" y="497" width="15" height="15" fill="#fff" stroke="#222"/><rect x="399" y="497" width="15" height="4" fill="#40d8e8" opacity=".8"/><path d="M403 505c2-3 4-3 7 0" stroke="#1030e0" stroke-width="2" fill="none"/><polygon points="408,509 413,507 409,503" fill="#1030e0"/>
</svg>
</body></html>
